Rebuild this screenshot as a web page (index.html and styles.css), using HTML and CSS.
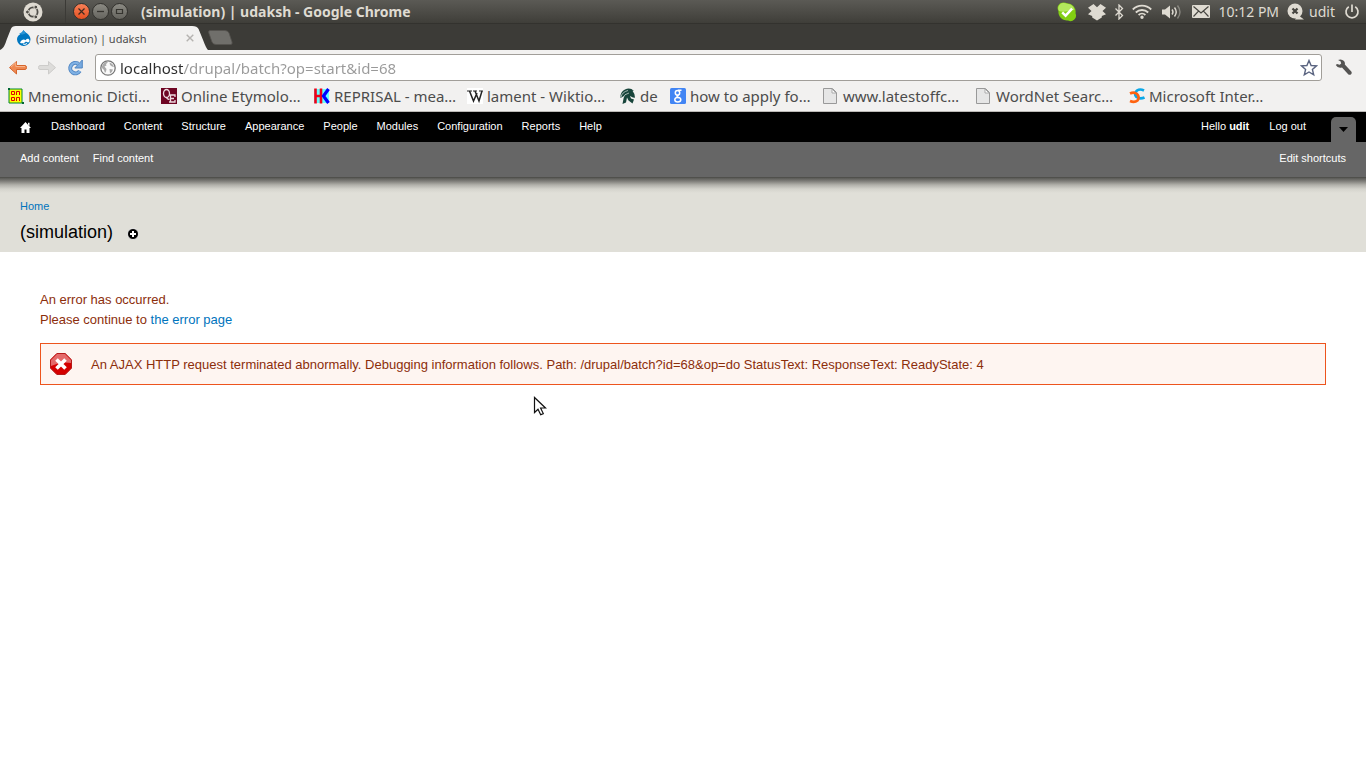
FILE: index.html
```html
<!DOCTYPE html>
<html lang="en">
<head>
<meta charset="utf-8">
<title>(simulation) | udaksh</title>
<link rel="stylesheet" href="styles.css">
</head>
<body>
<header class="panel">
  <svg class="panel-logo" width="20" height="20" viewBox="0 0 20 20"><circle cx="10" cy="10" r="9.5" fill="#dfdbd2"/><circle cx="10" cy="10" r="4.600" fill="none" stroke="#504e49" stroke-width="1.800"/><g fill="#504e49" stroke="#dfdbd2" stroke-width="1"><circle cx="4.400" cy="10" r="1.900"/><circle cx="12.800" cy="5.100" r="1.900"/><circle cx="12.800" cy="14.900" r="1.900"/></g></svg>
  <div class="window-controls">
    <button class="round round-close" aria-label="Close window"><svg width="17" height="17" viewBox="0 0 17 17"><path d="M5.500 5.500l6 6m0-6l-6 6" stroke="#3c2a20" stroke-width="1.200"/></svg></button>
    <button class="round" aria-label="Minimize"><svg width="17" height="17" viewBox="0 0 17 17"><path d="M5 8.500h7" stroke="#35342f" stroke-width="1.300"/></svg></button>
    <button class="round" aria-label="Restore"><svg width="17" height="17" viewBox="0 0 17 17"><path d="M5.500 6.500h6v4h-6z" fill="none" stroke="#35342f" stroke-width="1.200"/></svg></button>
  </div>
  <div class="window-title">(simulation) | udaksh - Google Chrome</div>
  <div class="indicators">
    <svg class="ind-skype" width="20" height="20" viewBox="0 0 20 20"><path d="M6 0.500a6 6 0 0 1 4 .8 8.500 8.500 0 0 1 8.500 10 5.500 5.500 0 0 1-7.500 7.200A8.500 8.500 0 0 1 1.500 9 5.500 5.500 0 0 1 6 .5z" fill="#82cf12"/><path d="M6 1a6 6 0 0 1 4 .8 8 8 0 0 1 7.500 6.200c-5 0-10 3-15.500 1C0 6 2 1.500 6 1z" fill="#b3e75d"/><path d="M5.200 10.300l3.400 3.400 6.500-7" fill="none" stroke="#fff" stroke-width="2.500"/></svg>
    <svg class="ind-dropbox" width="18" height="18" viewBox="0 0 18 18" fill="#dfdbd2"><path d="M5.500 1L9 4.200 12.500 1 18 4.800 14.500 8 18 11.200 13.800 13v1.500L9 17.500l-4.800-3V13L0 11.200 3.500 8 0 4.800z"/></svg>
    <svg class="ind-bt" width="10" height="16" viewBox="0 0 10 16"><path d="M1.500 4.500l7 7L5 15V1l3.500 3.500-7 7" fill="none" stroke="#dfdbd2" stroke-width="1.300"/></svg>
    <svg class="ind-wifi" width="20" height="15" viewBox="0 0 20 15" fill="none" stroke="#dfdbd2" stroke-width="1.800"><path d="M.8 5.500a13 13 0 0 1 18.400 0M3.800 8.500a9 9 0 0 1 12.400 0M6.600 11a5 5 0 0 1 6.800 0"/><circle cx="10" cy="13.200" r=".8"/></svg>
    <svg class="ind-sound" width="20" height="16" viewBox="0 0 20 16"><path d="M0 5.500h3L8 1.500v13l-5-4H0z" fill="#dfdbd2"/><g fill="none" stroke="#dfdbd2" stroke-width="1.400"><path d="M10 5.500q2 2.500 0 5M12.500 3.500q3.500 4.500 0 9"/><path d="M15.500 1.500q5 6.500 0 13" opacity=".4"/></g></svg>
    <svg class="ind-mail" width="18" height="13" viewBox="0 0 18 13"><rect width="18" height="13" rx="1" fill="#dfdbd2"/><path d="M1.500 1.500L9 8l7.500-6.500M1.500 11.500l5-5.300m10 5.300l-5-5.300" fill="none" stroke="#45443f" stroke-width="1.200"/></svg>
    <span class="clock">10:12 PM</span>
    <svg class="ind-user" width="17" height="17" viewBox="0 0 17 17"><circle cx="8" cy="8" r="7.500" fill="#dfdbd2"/><path d="M11 12l6 4.500H8z" fill="#dfdbd2"/><path d="M5.500 5.500l5 5m0-5l-5 5" stroke="#45443f" stroke-width="2.200"/></svg>
    <span class="user">udit</span>
    <svg width="16" height="16" viewBox="0 0 16 16" fill="none" stroke="#dfdbd2" stroke-width="1.700"><path d="M4.800 2.800a6 6 0 1 0 6.400 0M8 .5V8"/></svg>
  </div>
</header>

<nav class="tabs" aria-label="Tabs">
  <div class="tab">
    <svg class="tab-shape" viewBox="0 0 210 24" preserveAspectRatio="none"><path d="M0 24C4 22 5 19 7 13L11 3Q12 0 16 0H194Q199 0 200.500 3L205 14Q208 22 210 24z" fill="#f2f1f0"/></svg>
    <svg class="tab-icon" width="16" height="16" viewBox="0 0 16 16"><path d="M7.500 0c1 2.500 6.500 4 7 9a6.700 6.700 0 0 1-13.500.5C1 4.500 6.500 4 7.500 0z" fill="#0077c0"/><path d="M3 3.500C5 2.800 6.500 2 7.500 0c.5 1 1.500 2 2.500 3-2 1.500-4 2-7 .5z" fill="#2a95d5"/><path d="M4 12.500c1.500-3 4-4 5.500-2.200 1.500-2 3.500-2 4 .2.200 2-1.500 2.500-3.500 1-2 2-4.500 2.500-6 1z" fill="#fff"/><path d="M7 14q2 1 4-.5" fill="none" stroke="#fff"/></svg>
    <span class="tab-label">(simulation) | udaksh</span>
    <button class="tab-close" aria-label="Close tab"><svg width="8" height="8" viewBox="0 0 8 8"><path d="M.7.700l6.600 6.600m0-6.600L.7 7.300" stroke="#b5b3b0" stroke-width="1.400"/></svg></button>
  </div>
  <button class="new-tab" aria-label="New tab"><svg width="25" height="15" viewBox="0 0 25 15"><path d="M2 .5H17q3 0 4 2.500L24 12q.8 2.500-1.500 2.500H8Q5 14.500 4 12L.8 3Q0 .5 2 .5z" fill="#706f6b" stroke="#55534f" stroke-width=".8"/></svg></button>
</nav>

<div class="toolbar">
  <button class="tool" aria-label="Back"><svg width="20" height="16" viewBox="0 0 20 16"><path d="M8.500 1.500v4h8.500q1.500 0 1.500 2t-1.500 2H8.500v4.500L1.500 7.600z" fill="#ef8952" stroke="#d5652c" stroke-linejoin="round"/><path d="M3 7l4.800-4.300V6.500H17" fill="none" stroke="#f8b48b"/></svg></button>
  <button class="tool" aria-label="Forward"><svg width="20" height="16" viewBox="0 0 20 16"><path d="M11.500 1.500v4H3q-1.500 0-1.500 2t1.500 2h8.500v4.500l7-6.400z" fill="#dddcda" stroke="#cdccca" stroke-linejoin="round"/></svg></button>
  <button class="tool" aria-label="Reload"><svg width="18" height="18" viewBox="0 0 18 18"><path d="M12.200 4.700A5.200 5.200 0 1 0 13.800 12" fill="none" stroke="#5287c3" stroke-width="4"/><path d="M16.300 1v8H8.800z" fill="#76a9df" stroke="#5287c3" stroke-linejoin="round"/><path d="M12.200 4.700A5.200 5.200 0 1 0 13.800 12" fill="none" stroke="#80b2e5" stroke-width="2.200"/></svg></button>
  <div class="omnibox">
    <svg width="16" height="16" viewBox="0 0 16 16"><circle cx="8" cy="8" r="7.200" fill="#fafafa" stroke="#777" stroke-width="1.300"/><path d="M2 6q1-3 4-4.200l2 .7-2 1.500.5 1.500-2 1L6.500 9 6 11.500 5 13 4 10 2 8zM9.500 2.500q3.500 1 4.500 4.500l-2-.5-2-1.500zM9.500 9L13 9.500q-.7 2.500-3 4z" fill="#aaa"/></svg>
    <input class="url" type="text" aria-label="Address" value="localhost/drupal/batch?op=start&amp;id=68">
    <button class="star" aria-label="Bookmark this page"><svg width="18" height="18" viewBox="0 0 18 18"><path d="M9 1.500l2.100 5 5.400.4-4.100 3.600 1.300 5.300L9 13l-4.700 2.800 1.300-5.300L1.500 6.900l5.400-.4z" fill="#fff" stroke="#5a6480" stroke-width="1.400"/></svg></button>
  </div>
  <button class="wrench" aria-label="Settings"><svg width="18" height="17" viewBox="0 0 18 17"><path d="M3 1Q6.500-.5 9 2q1.300 1.600.8 3.500l6.500 7q1 1.500-.2 2.700t-2.700.2L7 8.500Q3 9.800.8 6L2 5l2.700.8L6.200 4.500 5.500 2.300z" fill="#555453"/></svg></button>
</div>

<nav class="bookmarks" aria-label="Bookmarks">
  <a class="bookmark" href="#"><svg width="16" height="16" viewBox="0 0 16 16"><path d="M1 1h13v14H1z" fill="#ff0" stroke="#083" stroke-width="1"/><path d="M0 0h2v2H0zM14 14h2v2h-2z" fill="#063"/><g fill="none" stroke="#e00000" stroke-width="1"><path d="M3.500 3.500h3v3h-3zM8.500 7V3.500h3V7M3.500 9.500h3v3h-3zM8.500 13V9.500h3V13"/></g></svg><span>Mnemonic Dicti…</span></a>
  <a class="bookmark" href="#"><svg width="16" height="16" viewBox="0 0 16 16"><path d="M0 0h16v16H0z" fill="#6e0523"/><g fill="none" stroke="#eddbe0" stroke-width="1.300"><ellipse cx="5.500" cy="5.500" rx="3" ry="4"/><path d="M5.500 9q1 3 3 2M8 7h6v2M9.500 7v7M8 14h6v-2M9.500 10.500H13"/></g></svg><span>Online Etymolo…</span></a>
  <a class="bookmark" href="#"><svg width="16" height="16" viewBox="0 0 16 16"><path d="M0 1h15v14H0z" fill="#6ff"/><path d="M1.500 0.500v15M7 .5v15M1 8h6" stroke="#f00018" stroke-width="2.600"/><path d="M14.500 1L9.500 8l5 7" fill="none" stroke="#00f" stroke-width="3.200"/></svg><span>REPRISAL - mea…</span></a>
  <a class="bookmark" href="#"><svg width="16" height="16" viewBox="0 0 16 16"><path d="M0 0h16v16H0z" fill="#fff"/><path d="M0 3h5M6 3h4M12 3h4" stroke="#222"/><path d="M2.500 3l4 10L10 5M8 3l4 10 3-10" fill="none" stroke="#222" stroke-width="1.500"/></svg><span>lament - Wiktio…</span></a>
  <a class="bookmark bookmark-short" href="#"><svg width="16" height="16" viewBox="0 0 16 16"><path d="M.5 10Q0 4 5 1.500 10-1 14 3l-1.500-.2q2.500 3 2.500 7l-2-.3-3-1.500 1 2.500 3 1-1.500 4-4-3-1.500-3-1 5L2.500 16 4 8z" fill="#18453b"/><path d="M1 9Q2 4 8 2.500M3 10q1-4 6-5" fill="none" stroke="#dfe5e2" stroke-width=".7"/></svg><span>de</span></a>
  <a class="bookmark" href="#"><svg width="16" height="16" viewBox="0 0 16 16"><rect width="16" height="16" rx="1.500" fill="#4285f4"/><g fill="none" stroke="#fff" stroke-width="1.500"><ellipse cx="7.500" cy="4.800" rx="2.200" ry="2.400"/><ellipse cx="7.800" cy="11.800" rx="3" ry="2.200"/><path d="M8 2.200h3.500M8.500 7q-3 1 0 2.500"/></g></svg><span>how to apply fo…</span></a>
  <a class="bookmark" href="#"><svg width="16" height="16" viewBox="0 0 16 16"><path d="M.5.500h9l4 4v11H.5z" fill="#e6e6e6" stroke="#999"/><path d="M9 1v4h4z" fill="#fff" stroke="#aaa"/></svg><span>www.latestoffc…</span></a>
  <a class="bookmark" href="#"><svg width="16" height="16" viewBox="0 0 16 16"><path d="M.5.500h9l4 4v11H.5z" fill="#e6e6e6" stroke="#999"/><path d="M9 1v4h4z" fill="#fff" stroke="#aaa"/></svg><span>WordNet Searc…</span></a>
  <a class="bookmark" href="#"><svg width="16" height="16" viewBox="0 0 16 16" fill="none" stroke-width="2.600"><path d="M15 2.500Q11 .5 8 2.500 4.500 6 7.500 9q3.500 2.500 8 .5" stroke="#0aa8e8"/><path d="M1 5.500Q5 3.500 8 6q3 3 .5 6.500-3 2.500-7.500.5" stroke="#ff6310"/></svg><span>Microsoft Inter…</span></a>
</nav>

<div class="admin-bar">
  <nav class="admin-menu" aria-label="Administration">
    <a href="#" aria-label="Home page" class="home"><svg width="12" height="11" viewBox="0 0 12 11"><path d="M5.500 0L11 6H9.500v5h-3V7.500h-2V11h-3V6H0zM8 .8h1.500V4L8 2.500z" fill="#fff"/></svg></a>
    <a href="#">Dashboard</a><a href="#">Content</a><a href="#">Structure</a><a href="#">Appearance</a><a href="#">People</a><a href="#">Modules</a><a href="#">Configuration</a><a href="#">Reports</a><a href="#">Help</a>
  </nav>
  <div class="admin-user">
    <a href="#">Hello <strong>udit</strong></a><a href="#">Log out</a>
    <button class="drawer-toggle" aria-label="Hide shortcuts"><svg width="9" height="5" viewBox="0 0 9 5"><path d="M0 0h9L4.500 5z" fill="#000"/></svg></button>
  </div>
</div>
<div class="shortcuts">
  <a href="#">Add content</a><a href="#">Find content</a><a class="edit" href="#">Edit shortcuts</a>
</div>

<div class="branding">
  <a class="crumb" href="#">Home</a>
  <div class="heading">
    <h1>(simulation)</h1>
    <button class="add" aria-label="Add to shortcuts"><svg width="12" height="12" viewBox="0 0 12 12"><circle cx="6" cy="6" r="5.500" fill="#000" stroke="#fff" stroke-width=".8"/><path d="M6 3v6M3 6h6" stroke="#fff" stroke-width="2"/></svg></button>
  </div>
</div>

<main class="content">
  <p class="error-text">An error has occurred.<br>Please continue to <a href="#">the error page</a></p>
  <div class="message" role="alert">
    <svg width="22" height="22" viewBox="0 0 22 22"><path d="M6.800.5h8.400l6.300 6.300v8.400l-6.300 6.300H6.800L.5 15.200V6.800z" fill="#d40000" stroke="#b51b1b"/><path d="M7 1h8l6 6v3Q11 8 1 13V7z" fill="#e46a6a"/><path d="M6.500 6.500l9 9m0-9l-9 9" stroke="#fff" stroke-width="3.600"/></svg>
    <span>An AJAX HTTP request terminated abnormally. Debugging information follows. Path: /drupal/batch?id=68&amp;op=do StatusText: ResponseText: ReadyState: 4</span>
  </div>
</main>
<svg class="pointer" width="14" height="21" viewBox="0 0 14 21"><path d="M1.500 1.500v15l3.500-3.300 2.700 5.600 2.600-1.200L7.600 12h4.900z" fill="#fff" stroke="#111" stroke-width="1.200"/></svg>
</body>
</html>
```

FILE: styles.css
```css
* { box-sizing: border-box; }
body {
  margin: 0;
  min-height: 100vh;
  background: #fff;
  font-family: "Liberation Sans", Arial, sans-serif;
  font-size: 13px;
}
a { text-decoration: none; color: #0074bd; }
button { padding: 0; border: 0; background: none; display: flex; align-items: center; justify-content: center; }
svg { flex: none; display: block; }

/* Desktop panel */
.panel {
  display: flex;
  align-items: center;
  height: 24px;
  padding: 0 6px 0 23px;
  background: linear-gradient(#5b5a55, #3f3e39);
  border-bottom: 1px solid #33322e;
  color: #dfdbd2;
  font-family: "Noto Sans", sans-serif;
  font-size: 14px;
  white-space: nowrap;
}
.window-controls {
  display: flex;
  gap: 2px;
  height: 23px;
  align-items: center;
  margin-left: 22px;
  padding-left: 7px;
  border-left: 1px solid #3b3a36;
}
.round { width: 17px; height: 17px; border-radius: 50%; background: linear-gradient(#8b8a83, #65645e); border: 1px solid #33322e; }
.round-close { background: linear-gradient(#f88057, #e45122); }
.window-title { margin-left: 13px; font-weight: 700; }
.indicators { display: flex; align-items: center; margin-left: auto; }
.ind-skype { margin-right: 11px; }
.ind-dropbox { margin-right: 8px; }
.ind-bt { margin-right: 8px; }
.ind-wifi { margin-right: 10px; }
.ind-sound { margin-right: 10px; }
.ind-mail { margin-right: 8px; }
.clock { margin-right: 8px; }
.ind-user { margin-right: 5px; }
.user { margin-right: 9px; }

/* Browser tabs */
.tabs { display: flex; align-items: center; height: 26px; background: #3c3b37; }
.tab {
  position: relative;
  display: flex;
  align-items: center;
  align-self: flex-end;
  width: 208px;
  height: 24px;
  padding: 0 14px 0 16px;
  gap: 4px;
  color: #4c4c4c;
  font-family: "Noto Sans", sans-serif;
  font-size: 11px;
}
.tab-shape { position: absolute; inset: 0; width: 100%; height: 100%; }
.tab-icon, .tab-label, .tab-close { position: relative; }
.tab-close { margin-left: auto; }

/* Navigation toolbar */
.toolbar { display: flex; align-items: center; gap: 9px; height: 35px; padding: 0 13px 0 8px; background: #f2f1f0; }
.tool { height: 20px; }
.omnibox {
  display: flex;
  align-items: center;
  flex: 1;
  height: 27px;
  margin-left: 2px;
  padding: 0 3px 0 4px;
  background: #fff;
  border: 1px solid #a19e99;
  border-radius: 3px;
}
.url {
  flex: 1;
  min-width: 0;
  padding: 0 4px;
  border: 0;
  outline: 0;
  font-family: "Noto Sans", sans-serif;
  font-size: 15px;
  background: linear-gradient(90deg, #2d2d2d 68px, #999 68px);
  background-clip: text;
  -webkit-background-clip: text;
  color: transparent;
}
.wrench { margin-left: 4px; }

/* Bookmarks */
.bookmarks {
  display: flex;
  height: 27px;
  padding: 0 8px 4px;
  background: #f2f1f0;
  border-bottom: 1px solid #bbb9b6;
  font-family: "Noto Sans", sans-serif;
  font-size: 15px;
}
.bookmark { display: flex; align-items: center; gap: 4px; flex: 0 0 153px; color: #4c4c4c; white-space: nowrap; }
.bookmark-short { flex-basis: 50px; }

/* Administration bar */
.admin-bar { display: flex; justify-content: space-between; height: 30px; padding: 0 10px; background: #000; font-size: 11px; }
.admin-bar a { color: #fff; }
.admin-menu { display: flex; align-items: center; gap: 19px; padding: 0 10px 2px; }
.home { padding-top: 2px; }
.admin-user { display: flex; align-items: center; gap: 20px; }
.admin-user a { padding-bottom: 2px; }
.drawer-toggle { align-self: flex-end; width: 25px; height: 25px; margin-left: 5px; background: #666; border-radius: 5px 5px 0 0; }
.shortcuts {
  display: flex;
  align-items: center;
  gap: 14px;
  height: 36px;
  padding: 0 20px 3px;
  background: #666;
  border-bottom: 1px solid #50504c;
  font-size: 11px;
}
.shortcuts a { color: #fff; }
.edit { margin-left: auto; }

/* Page title */
.branding {
  padding: 20px 20px 8px;
  background: linear-gradient(#5a5a56, #7c7b77 3px, #b2b1ab 7px, #d4d3cc 11px, #e0dfd8 15px);
}
.crumb { display: block; font-size: 11px; line-height: 16px; }
.heading { display: flex; align-items: center; gap: 14px; margin-top: 6px; }
h1 { margin: 0; font-size: 18px; line-height: 24px; font-weight: 400; color: #000; }
.add { padding-top: 4px; }

/* Messages */
.content { padding: 38px 40px; color: #8c2e0b; }
.error-text { margin: 0 0 13px; line-height: 20px; }
.message {
  display: flex;
  align-items: center;
  gap: 19px;
  min-height: 42px;
  padding: 9px;
  background: #fef5f1;
  border: 1px solid #ed541d;
}
.pointer { position: absolute; left: 533px; top: 396px; }
```
